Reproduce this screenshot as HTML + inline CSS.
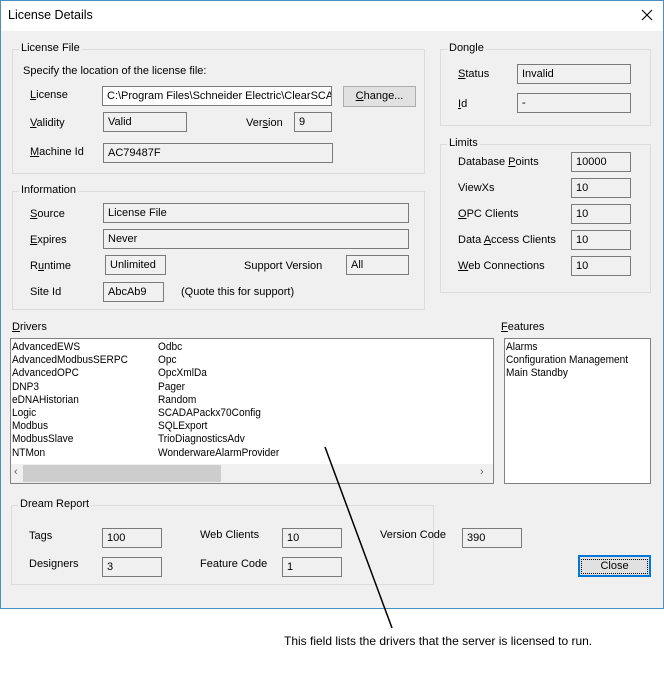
<!DOCTYPE html>
<html><head><meta charset="utf-8"><style>
*{margin:0;padding:0;box-sizing:border-box}
body{width:664px;height:674px;background:#fff;position:relative;font-family:"Liberation Sans",sans-serif;font-size:11px;color:#000;overflow:hidden}
.win{position:absolute;left:0;top:0;width:664px;height:609px;background:#f0f0f0}
.bd{position:absolute;left:0;top:0;width:664px;height:609px;border:1px solid #4a90c0}
.title{position:absolute;left:0;top:0;width:664px;height:31px;background:#fff}
.a{position:absolute;white-space:nowrap}
.g{position:absolute;border:1px solid #dcdcdc}
.lg{position:absolute;background:#f0f0f0;padding:0 2px;white-space:nowrap}
.f{position:absolute;border:1px solid #7a7a7a;background:#f0f0f0;padding:3px 0 0 4px;white-space:nowrap;overflow:hidden;height:20px}
.btn{position:absolute;border:1px solid #adadad;background:#e1e1e1;text-align:center;padding-top:3px}
u{text-decoration:underline}
.lst{line-height:13.2px;font-size:11px;transform:scaleX(0.92);transform-origin:0 0}
</style></head><body>
<div class="win">
<div class="title"></div>
<div class="a" style="left:8px;top:8px;font-size:12.5px">License Details</div>
<svg class="a" style="left:641px;top:9px" width="12" height="12"><path d="M1 1L11 11M11 1L1 11" stroke="#000" stroke-width="1.1"/></svg>

<div class="g" style="left:12px;top:49px;width:413px;height:125px"></div>
<div class="lg" style="left:19px;top:42px">License File</div>
<div class="a" style="left:23px;top:65px">Specify the location of the license file:</div>
<div class="a" style="left:30px;top:89px"><u>L</u>icense</div>
<div class="f" style="left:102px;top:86px;width:230px;background:#fff">C:\Program Files\Schneider Electric\ClearSCADA</div>
<div class="btn" style="left:343px;top:86px;width:73px;height:21px"><u>C</u>hange...</div>
<div class="a" style="left:30px;top:117px"><u>V</u>alidity</div>
<div class="f" style="left:103px;top:112px;width:84px">Valid</div>
<div class="a" style="left:246px;top:117px">Ver<u>s</u>ion</div>
<div class="f" style="left:294px;top:112px;width:38px">9</div>
<div class="a" style="left:30px;top:146px"><u>M</u>achine Id</div>
<div class="f" style="left:103px;top:143px;width:230px">AC79487F</div>

<div class="g" style="left:12px;top:191px;width:413px;height:119px"></div>
<div class="lg" style="left:19px;top:184px">Information</div>
<div class="a" style="left:30px;top:208px"><u>S</u>ource</div>
<div class="f" style="left:103px;top:203px;width:306px">License File</div>
<div class="a" style="left:30px;top:234px"><u>E</u>xpires</div>
<div class="f" style="left:103px;top:229px;width:306px">Never</div>
<div class="a" style="left:30px;top:260px">R<u>u</u>ntime</div>
<div class="f" style="left:105px;top:255px;width:61px">Unlimited</div>
<div class="a" style="left:244px;top:260px">Support Version</div>
<div class="f" style="left:346px;top:255px;width:63px">All</div>
<div class="a" style="left:30px;top:286px">Site Id</div>
<div class="f" style="left:103px;top:282px;width:61px">AbcAb9</div>
<div class="a" style="left:181px;top:286px">(Quote this for support)</div>

<div class="g" style="left:440px;top:49px;width:211px;height:77px"></div>
<div class="lg" style="left:447px;top:42px">Dongle</div>
<div class="a" style="left:458px;top:68px"><u>S</u>tatus</div>
<div class="f" style="left:517px;top:64px;width:114px">Invalid</div>
<div class="a" style="left:458px;top:98px"><u>I</u>d</div>
<div class="f" style="left:517px;top:93px;width:114px">-</div>

<div class="g" style="left:440px;top:144px;width:211px;height:149px"></div>
<div class="lg" style="left:447px;top:137px">Limits</div>
<div class="a" style="left:458px;top:156px">Database <u>P</u>oints</div>
<div class="f" style="left:571px;top:152px;width:60px">10000</div>
<div class="a" style="left:458px;top:182px">ViewXs</div>
<div class="f" style="left:571px;top:178px;width:60px">10</div>
<div class="a" style="left:458px;top:208px"><u>O</u>PC Clients</div>
<div class="f" style="left:571px;top:204px;width:60px">10</div>
<div class="a" style="left:458px;top:234px">Data <u>A</u>ccess Clients</div>
<div class="f" style="left:571px;top:230px;width:60px">10</div>
<div class="a" style="left:458px;top:260px"><u>W</u>eb Connections</div>
<div class="f" style="left:571px;top:256px;width:60px">10</div>

<div class="a" style="left:12px;top:321px"><u>D</u>rivers</div>
<div class="a" style="left:10px;top:338px;width:484px;height:146px;border:1px solid #828282;background:#fff"></div>
<div class="a lst" style="left:12px;top:341px">AdvancedEWS<br>AdvancedModbusSERPC<br>AdvancedOPC<br>DNP3<br>eDNAHistorian<br>Logic<br>Modbus<br>ModbusSlave<br>NTMon</div>
<div class="a lst" style="left:158px;top:341px">Odbc<br>Opc<br>OpcXmlDa<br>Pager<br>Random<br>SCADAPackx70Config<br>SQLExport<br>TrioDiagnosticsAdv<br>WonderwareAlarmProvider</div>
<div class="a" style="left:11px;top:464px;width:482px;height:19px;background:#f0f0f0"></div>
<div class="a" style="left:23px;top:465px;width:198px;height:17px;background:#cdcdcd"></div>
<div class="a" style="left:14px;top:466px;color:#606060;font-size:11px">&lsaquo;</div>
<div class="a" style="left:480px;top:466px;color:#606060;font-size:11px">&rsaquo;</div>

<div class="a" style="left:501px;top:321px"><u>F</u>eatures</div>
<div class="a" style="left:504px;top:338px;width:147px;height:146px;border:1px solid #828282;background:#fff"></div>
<div class="a lst" style="left:506px;top:341px">Alarms<br>Configuration Management<br>Main Standby</div>

<div class="g" style="left:11px;top:505px;width:423px;height:80px"></div>
<div class="lg" style="left:18px;top:498px">Dream Report</div>
<div class="a" style="left:29px;top:530px">Tags</div>
<div class="f" style="left:102px;top:528px;width:60px">100</div>
<div class="a" style="left:29px;top:558px">Designers</div>
<div class="f" style="left:102px;top:557px;width:60px">3</div>
<div class="a" style="left:200px;top:529px">Web Clients</div>
<div class="f" style="left:282px;top:528px;width:60px">10</div>
<div class="a" style="left:200px;top:558px">Feature Code</div>
<div class="f" style="left:282px;top:557px;width:60px">1</div>
<div class="a" style="left:380px;top:529px">Version Code</div>
<div class="f" style="left:462px;top:528px;width:60px">390</div>

<div class="btn" style="left:578px;top:555px;width:73px;height:22px;border:2px solid #0078d7;padding-top:2px"><div style="border:1px dotted #000;margin:0 1px;height:15px;line-height:13px">Close</div></div>
<div class="bd"></div>
</div>
<svg class="a" style="left:0;top:0" width="664" height="674"><path d="M325 447L392 628" stroke="#000" stroke-width="1.5"/></svg>
<div class="a" style="left:284px;top:634px;font-size:12px">This field lists the drivers that the server is licensed to run.</div>
</body></html>
